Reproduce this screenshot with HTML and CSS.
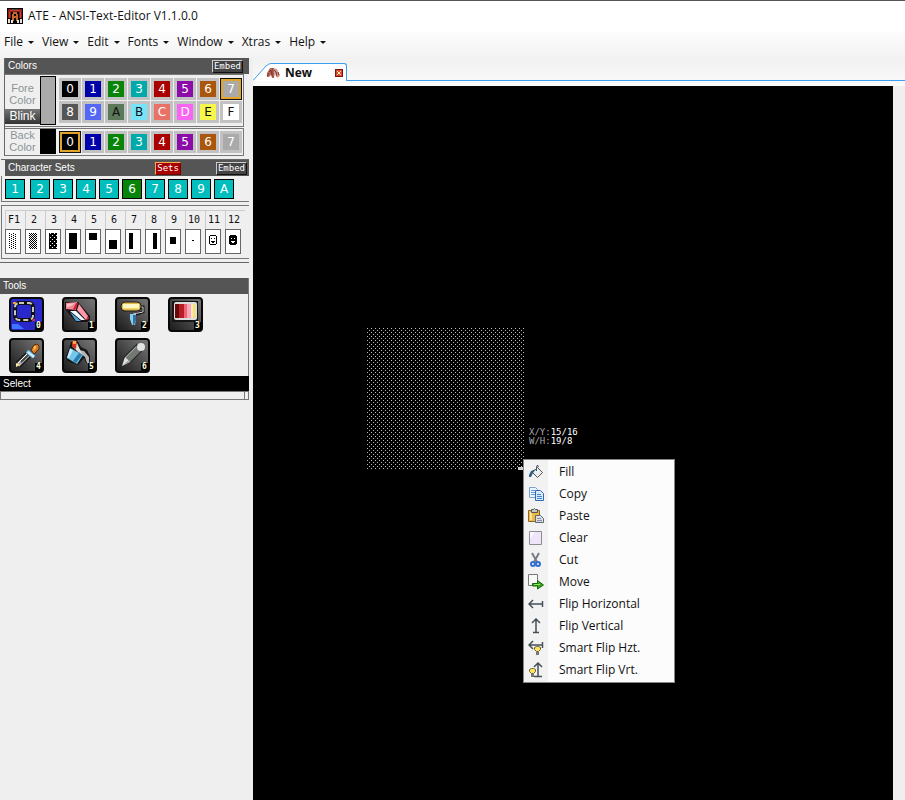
FILE: index.html
```
<!DOCTYPE html>
<html lang="en">
<head>
<meta charset="utf-8">
<title>ATE - ANSI-Text-Editor V1.1.0.0</title>
<link rel="stylesheet" href="styles.css">
</head>
<body>
<header class="titlebar">
  <svg class="logo" viewBox="0 0 16 16" shape-rendering="crispEdges"><path fill="#080404" d="M0 0h16v16H0z"/><path fill="#7c2020" d="M1 1h14v3H1zM1 4h3v6H1zM12 4h3v6h-3z"/><path fill="#d63a22" d="M3 2h10v1H3zM2 3h1v7H2zM13 3h1v7h-1z"/><path fill="#40454b" d="M5 1h6v1H5z"/><path fill="#c26a2a" d="M6 4h4v2h1v7H9v-3H7v3H5V6h1zM7 6v2h2V6z"/><path fill="#e9e1dc" d="M1 11h2v4H1zM4 12h2v3H4zM10 12h2v3h-2zM13 11h2v4h-2z"/></svg>
  <h1>ATE - ANSI-Text-Editor V1.1.0.0</h1>
</header>
<nav class="menubar">
  <button>File</button><button>View</button><button>Edit</button><button>Fonts</button><button>Window</button><button>Xtras</button><button>Help</button>
</nav>
<main class="workspace">
  <aside class="sidebar">
    <section class="colors">
      <header class="bar"><h2>Colors</h2><button class="mini">Embed</button></header>
      <div class="panel fore">
        <div class="side"><span class="name">Fore<br>Color</span><button class="blink">Blink</button></div>
        <div class="preview gray"></div>
        <div class="swatches">
          <button class="c0">0</button><button class="c1">1</button><button class="c2">2</button><button class="c3">3</button><button class="c4">4</button><button class="c5">5</button><button class="c6">6</button><button class="c7 picked">7</button>
          <button class="c8">8</button><button class="c9">9</button><button class="ca">A</button><button class="cb">B</button><button class="cc">C</button><button class="cd">D</button><button class="ce">E</button><button class="cf">F</button>
        </div>
      </div>
      <div class="panel back">
        <div class="side"><span class="name">Back<br>Color</span></div>
        <div class="preview"></div>
        <div class="swatches">
          <button class="c0 picked">0</button><button class="c1">1</button><button class="c2">2</button><button class="c3">3</button><button class="c4">4</button><button class="c5">5</button><button class="c6">6</button><button class="c7">7</button>
        </div>
      </div>
    </section>
    <section class="charsets">
      <header class="bar"><h2>Character Sets</h2><button class="mini red">Sets</button><button class="mini">Embed</button></header>
      <div class="sets">
        <button>1</button><button>2</button><button>3</button><button>4</button><button>5</button><button class="on">6</button><button>7</button><button>8</button><button>9</button><button>A</button>
      </div>
      <div class="keys">
        <button><span>F1</span><i><svg viewBox="0 0 8 16"><path fill="url(#light)" d="M0 0h8v16H0z"/></svg></i></button>
        <button><span>2</span><i><svg viewBox="0 0 8 16"><path fill="url(#mid)" d="M0 0h8v16H0z"/></svg></i></button>
        <button><span>3</span><i><svg viewBox="0 0 8 16"><path d="M0 0h8v16H0z"/><path fill="url(#holes)" d="M0 0h8v16H0z"/></svg></i></button>
        <button><span>4</span><i><svg viewBox="0 0 8 16"><path d="M0 0h8v16H0z"/></svg></i></button>
        <button><span>5</span><i><svg viewBox="0 0 8 16"><path d="M0 0h8v7H0z"/></svg></i></button>
        <button><span>6</span><i><svg viewBox="0 0 8 16"><path d="M0 7h8v9H0z"/></svg></i></button>
        <button><span>7</span><i><svg viewBox="0 0 8 16"><path d="M0 0h4v16H0z"/></svg></i></button>
        <button><span>8</span><i><svg viewBox="0 0 8 16"><path d="M4 0h4v16H4z"/></svg></i></button>
        <button><span>9</span><i><svg viewBox="0 0 8 16"><path d="M1 4h6v7H1z"/></svg></i></button>
        <button><span>10</span><i><svg viewBox="0 0 8 16"><path d="M3 7h2v1H3z"/></svg></i></button>
        <button><span>11</span><i><svg viewBox="0 0 8 16"><path d="M1 2h6v1H1zM0 3h1v8H0zM7 3h1v8H7zM1 11h6v1H1zM2 5h1v1H2zM5 5h1v1H5zM2 8h4v1H2zM3 9h2v1H3z"/></svg></i></button>
        <button><span>12</span><i><svg viewBox="0 0 8 16"><path fill-rule="evenodd" d="M1 2h6v1h1v8H7v1H1v-1H0V3h1zM2 5v1h1V5zM5 5v1h1V5zM2 8v1h1v1h2V9h1V8z"/></svg></i></button>
      </div>
    </section>
    <section class="tools">
      <header class="bar"><h2>Tools</h2></header>
      <div class="toolgrid">
        <button class="selected" aria-label="Select"><svg viewBox="0 0 35 35"><path fill="#3e74ff" d="M3 27h6l6 5H3z"/><rect x="6" y="6" width="18" height="17" rx="4" fill="none" stroke="#111" stroke-width="4"/><rect x="6" y="6" width="18" height="17" rx="4" fill="none" stroke="#ccc8b8" stroke-width="2" stroke-dasharray="5 3"/><path fill="#e8a030" d="M4 5h3v2H4z"/><path fill="#c03050" d="M23 22h3v2h-3z"/></svg><b>0</b></button>
        <button aria-label="Eraser"><svg viewBox="0 0 35 35"><path fill="#1a1013" d="M3 5h13l12 14v4l-3 2H14L3 12z"/><path fill="#f08a98" d="M4 6l11-1-1 8-10-1z"/><path fill="#ffc0c4" d="M5 7l8-1-4 3-4 1z"/><path fill="#cf2630" d="M14 6h2l-3 8-2-2z"/><path fill="#ff98a8" d="M17 7l9 12-2 4-9-10z"/><path fill="#d63a48" d="M26 19l1 3-3 1z"/><path fill="#eef9ff" d="M8 14h6l9 9h-4z"/><path fill="#52a9df" d="M8 15l11 9h-5z"/></svg><b>1</b></button>
        <button aria-label="Roller"><svg viewBox="0 0 35 35"><path fill="none" stroke="#171717" stroke-width="3" d="M25 10h3v5l-10 3v3"/><path fill="none" stroke="#d0d0d0" d="M25 10h3v5l-10 2v2"/><rect x="6" y="5" width="20" height="9" rx="4" fill="#dfb94b" stroke="#1b1b1b"/><path fill="#fff8c5" d="M8 7h16v4H8z"/><path fill="#f2da70" d="M8 11h16v1H8z"/><path fill="#85cff1" d="M15 17h6v5l-1 6h-3l-2-6z"/><path fill="#36709f" d="M18 18h3v5l-2 5h-1z"/></svg><b>2</b></button>
        <button aria-label="Gradient"><svg viewBox="0 0 35 35"><path fill="#151515" d="M4 4h26v21H4z"/><rect x="6" y="5" width="23" height="18" rx="2" fill="#ddd"/><path fill="#650909" d="M7 7h4v14H7z"/><path fill="#b71d27" d="M11 7h5v14h-5z"/><path fill="#ed6676" d="M16 7h3v14h-3z"/><path fill="#f9a8b4" d="M19 7h4v14h-4z"/><path fill="#ffe0d9" d="M23 7h2v14h-2z"/><path fill="#f7e64b" d="M25 7h2v14h-2z"/></svg><b>3</b></button>
        <button aria-label="Color picker"><svg viewBox="0 0 35 35"><path stroke="#151515" stroke-width="7" d="M9 27l13-13"/><path stroke="#aaa" stroke-width="4" d="M9 27l12-12"/><path stroke="#444" stroke-width="2" d="M12 24l8-8"/><path stroke="#fff" d="M9 25l11-11"/><path fill="#ffe9a9" d="M7 25l4 2-4 2z"/><path stroke="#69bbed" stroke-width="4" d="M18 13l7 6"/><path stroke="#d7f3ff" stroke-width="2" d="M19 14l6 5"/><path fill="#d97c18" stroke="#5a2b09" d="M22 12l3-5 3-1 2 2v3l-5 5z"/><path fill="#ffc166" d="M25 8h2v2l-3 3z"/></svg><b>4</b></button>
        <button aria-label="Fill"><svg viewBox="0 0 35 35"><path fill="#171717" d="M4 19L9 4l6-2 4 7 6 3 3 6v7h-4l-2-5-6 7-11-4z"/><path fill="#b5b5b5" d="M17 12l5 1 5 6v6h-2l-2-6-5-4z"/><path fill="#74c5ea" d="M8 10l13 7-6 9-10-6z"/><path fill="#c7edfd" d="M8 11l3 1-4 8H5z"/><path fill="#287caf" d="M17 15l3 2-6 8-3-2z"/><path fill="#e2dfdc" d="M10 8l5-3 5 11-4-2z"/><path fill="#c7381c" d="M10 3h5l-1 8-4-2z"/><path fill="#ffa252" d="M11 3h3v3h-3z"/></svg><b>5</b></button>
        <button aria-label="Pencil"><svg viewBox="0 0 35 35"><path stroke="#242424" stroke-width="9" d="M11 23L25 9"/><path stroke="#727872" stroke-width="7" d="M12 22L24 10"/><path stroke="#a5aaa5" d="M11 19L21 9"/><circle cx="26" cy="9" r="4" fill="#e4e4e4"/><path fill="#e1e1e1" d="M10 19l5 5-8 4z"/><path fill="#999" d="M13 23l2 1-7 3z"/></svg><b>6</b></button>
      </div>
      <div class="status">Select</div>
      <div class="strip"></div>
    </section>
  </aside>
  <section class="document">
    <div class="tabs">
      <svg class="slope" viewBox="0 0 18 18"><path fill="#fff" d="M0 18L14 2l4-1v17z"/><path fill="none" stroke="#3b9df0" d="M0 17.500L13 3Q16 .5 18 .5"/></svg>
      <div class="tab">
        <svg class="docicon" viewBox="0 0 14 12"><path fill="#b76658" d="M1 6l3-5h3l1 10H6L5 8 3 10H1z"/><path fill="#d8998e" d="M7 1l4 1 3 7-3 2-2-4-1 4z"/><path stroke="#773329" fill="none" d="M3 5l2-2 1 5M8 3l2 2 1 4M7 1v9M1 9l2-3M12 5l1 3"/></svg>
        <span>New</span>
        <button class="close" aria-label="Close tab"><svg viewBox="0 0 8 8" shape-rendering="crispEdges"><path fill="#7b1510" d="M0 0h8v8H0z"/><path fill="#db4030" d="M1 1h6v6H1z"/><path fill="#fff3a8" d="M2 2h1v1H2zM5 2h1v1H5zM3 3h2v2H3zM2 5h1v1H2zM5 5h1v1H5z"/></svg></button>
      </div>
      <div class="rest"></div>
    </div>
    <div class="canvas">
      <div class="selection"></div>
      <div class="coords"><span>X/Y:</span>15/16<br><span>W/H:</span>19/8</div>
      <menu class="context">
        <li><button><svg viewBox="0 0 16 16"><path fill="#eee" stroke="#4a525a" d="M4.500 8.500l5-5 5 5-5 5zM8.500 7V3l1-2 1 2"/><path fill="#315f7f" d="M1 11l2-4 5-2-3 4-2 4H1z"/></svg>Fill</button></li>
        <li><button><svg viewBox="0 0 16 16"><path fill="#eaf5ff" stroke="#7da1cb" d="M1.500 1.500h6l2 2v8h-8z"/><path stroke="#5d9ce0" d="M3 4.500h4M3 6.500h4M3 8.500h4"/><path fill="#d8eaff" stroke="#3769ad" d="M7.500 4.500h5l3 3v7h-8z"/><path stroke="#4282ce" d="M9 8.500h4M9 10.500h5M9 12.500h5"/></svg>Copy</button></li>
        <li><button><svg viewBox="0 0 16 16"><path fill="#edba47" stroke="#8c6426" d="M.5 2.500h11v11H.5z"/><path fill="#ffe591" d="M2 4h2v8H2z"/><path fill="#c7c7c7" stroke="#555" d="M3.500 4.500v-3h2l1-1 1 1h2v3z"/><path fill="#ddd" stroke="#626974" d="M7.500 7.500h5l3 3v4h-8z"/><path stroke="#8393a6" d="M9 10.500h4M9 12.500h5"/></svg>Paste</button></li>
        <li><button><svg viewBox="0 0 16 16"><path fill="#eee5fa" stroke="#8c8c94" d="M1.500 1.500h12v13h-12z"/><path fill="#fbf8ff" d="M2 2h5L2 9z"/></svg>Clear</button></li>
        <li><button><svg viewBox="0 0 16 16"><path stroke="#777d82" stroke-width="2" d="M4 1l5 9M11 1L6 10"/><g fill="none" stroke="#326ed2" stroke-width="2"><circle cx="5" cy="12" r="2"/><circle cx="10" cy="12" r="2"/></g></svg>Cut</button></li>
        <li><button><svg viewBox="0 0 16 16"><path fill="#fafafa" stroke="#777" d="M.5 .5h9v11h-9z"/><path fill="#35a41d" stroke="#17670c" d="M4.500 9.500h5v-3l6 4.500-6 4v-3h-5z"/><path stroke="#9cde62" d="M6 10.500h6"/></svg>Move</button></li>
        <li><button><svg viewBox="0 0 16 16"><path fill="none" stroke="#475057" stroke-width="1.500" d="M1 8h14M5 4L1 8l4 4M14.500 5v6"/></svg>Flip Horizontal</button></li>
        <li><button><svg viewBox="0 0 16 16"><path fill="none" stroke="#475057" stroke-width="1.500" d="M8 1v14M4 5l4-4 4 4M5 14.500h6"/></svg>Flip Vertical</button></li>
        <li><button><svg viewBox="0 0 16 16"><path fill="none" stroke="#475057" stroke-width="1.500" d="M1 5h14M5 1L1 5l4 4M14.500 2v6"/><path fill="#ffe55d" stroke="#68603c" d="M6.500 7.500l2-1h2l2 1v2l-2 2h-2l-2-2z"/><path fill="#777" d="M8 12h3v3H8z"/></svg>Smart Flip Hzt.</button></li>
        <li><button><svg viewBox="0 0 16 16"><path fill="none" stroke="#475057" stroke-width="1.500" d="M10 1v13M6 5l4-4 4 4M6 14.500h8"/><path fill="#ffe55d" stroke="#68603c" d="M1.500 7.500l2-1h2l2 1v2l-2 2h-2l-2-2z"/><path fill="#777" d="M3 12h3v3H3z"/></svg>Smart Flip Vrt.</button></li>
      </menu>
    </div>
  </section>
</main>
<svg class="defs" aria-hidden="true"><defs>
  <pattern id="light" width="4" height="2" patternUnits="userSpaceOnUse"><path d="M0 0h1v1H0zM2 1h1v1H2z"/></pattern>
  <pattern id="mid" width="2" height="2" patternUnits="userSpaceOnUse"><path d="M0 0h1v1H0zM1 1h1v1H1z"/></pattern>
  <pattern id="holes" width="4" height="4" patternUnits="userSpaceOnUse"><path fill="#fff" d="M1 0h1v1H1zM3 2h1v1H3z"/></pattern>
</defs></svg>
</body>
</html>
```
FILE: styles.css
```
* { box-sizing: border-box; }
body {
  margin: 0;
  min-height: 100vh;
  display: flex;
  flex-direction: column;
  background: #efefef;
  color: #111;
  font: 12px/16px "Open Sans", "Noto Sans", sans-serif;
  position: relative;
}
button { font: inherit; color: inherit; border: 0; padding: 0; margin: 0; background: none; }
h1, h2 { margin: 0; font: inherit; }
svg { display: block; }
.defs { position: absolute; width: 0; height: 0; }

.titlebar {
  display: flex;
  align-items: center;
  gap: 5px;
  height: 31px;
  padding-left: 7px;
  border-top: 1px solid #555;
  background: #fff;
}
.logo { width: 16px; height: 16px; }
.menubar {
  display: flex;
  gap: 8px;
  height: 27px;
  padding: 0 4px 5px;
  background: linear-gradient(#fdfdfd, #f2f2f2);
}
.menubar button { display: flex; align-items: center; gap: 5px; }
.menubar button::after { content: ""; border: 3px solid transparent; border-top-color: #111; border-bottom: 0; }
.workspace { flex: 1; display: flex; }

.sidebar { width: 253px; flex: none; background: #efefef; }
.bar {
  display: flex;
  align-items: center;
  height: 16px;
  background: #555;
  color: #fff;
  font: 10px/16px "Liberation Sans", sans-serif;
  padding: 0 2px 0 3px;
}
.bar h2 { flex: 1; }
.mini {
  height: 13px;
  padding: 0 1px;
  border: 1px solid #ccc;
  border-right-color: #111;
  border-bottom-color: #111;
  background: #444;
  color: #fff;
  font: 9px/10px "DejaVu Sans Mono", monospace;
}
.red { background: #a80000; border-color: #f5b04d #700 #700 #f5b04d; margin-right: 35px; }

.colors { margin: 0 4px; border-left: 1px solid #666; }
.colors .bar { padding-right: 6px; }
.panel { display: flex; margin-right: 5px; border: 1px solid #777; border-left: 0; }
.fore { height: 53px; padding-top: 1px; }
.back { height: 28px; margin-top: 1px; }
.side { width: 35px; display: flex; flex-direction: column; justify-content: space-between; }
.name {
  text-align: center;
  color: #8b9495;
  font: 11px/12px "Liberation Sans", sans-serif;
}
.fore .name { padding-top: 6px; }
.blink {
  height: 15px;
  margin-bottom: 2px;
  color: #fff;
  background: linear-gradient(#777, #333);
  font: 12px/15px "Liberation Sans", sans-serif;
}
.preview { width: 16px; background: #000; border: 1px solid #000; margin-bottom: 1px; }
.gray { background: #aaa; }
.swatches { display: grid; grid-template-columns: repeat(8, 22px); gap: 1px; align-content: start; padding: 2px 0 0 3px; }
.swatches button {
  height: 22px;
  border: 3px solid #c2c2c2;
  color: #fff;
  font: 12px/16px "DejaVu Sans", sans-serif;
}
.swatches .picked { border: 1px solid #111; box-shadow: inset 0 0 0 2px #e2a32a; }
.c0 { background: #000; } .c1 { background: #00a; } .c2 { background: #088408; } .c3 { background: #00aaaa; }
.c4 { background: #a00; } .c5 { background: #8c0caa; } .c6 { background: #aa560c; } .c7 { background: #aaa; }
.c8 { background: #555; } .c9 { background: #5568f5; } .ca { background: #5a7958; } .cb { background: #75e4fa; }
.cc { background: #e87267; } .cd { background: #f865f2; } .ce { background: #f6f64d; } .cf { background: #fff; }
.swatches .ca, .swatches .cb, .swatches .ce, .swatches .cf { color: #111; }

.charsets { margin: 3px 4px 0 1px; border-top: 1px solid #666; }
.charsets .bar { margin-left: 4px; }
.sets {
  display: flex;
  gap: 3px;
  height: 26px;
  padding: 3px;
  border: 1px solid #777;
  border-width: 0 0 1px 1px;
}
.sets button {
  width: 20px;
  height: 20px;
  border: 1px solid #000;
  background: #00bebe;
  color: #fff;
  font: 12px/16px "DejaVu Sans", sans-serif;
}
.sets button:first-child { margin-right: 2px; }
.sets .on { background: #088408; }
.keys {
  display: flex;
  gap: 4px;
  height: 54px;
  margin-top: 3px;
  padding: 3px;
  border: 1px solid #777;
  border-right: 0;
}
.keys button { width: 16px; }
.keys span {
  display: block;
  width: 20px;
  height: 19px;
  padding-right: 3px;
  border: 1px solid #ccc;
  border-width: 1px 0 0 1px;
  font: 10px/17px "DejaVu Sans Mono", monospace;
}
.keys i { display: block; height: 25px; padding: 3px; border: 1px solid #666; background: #fff; }
.keys svg { width: 8px; height: 16px; margin: auto; shape-rendering: crispEdges; }

.tools { margin: 3px 4px 0 0; border-top: 1px solid #666; padding-top: 15px; }
.tools .bar { border-right: 1px solid #777; }
.toolgrid {
  display: grid;
  grid-template-columns: repeat(4, 35px);
  gap: 6px 18px;
  padding: 3px 0 3px 9px;
  border-right: 1px solid #777;
}
.toolgrid button {
  position: relative;
  height: 35px;
  border: 2px solid #080808;
  border-radius: 4px;
  background: linear-gradient(45deg, #1b1b1b, #777);
}
.toolgrid svg { width: 35px; height: 35px; margin: -2px; }
.toolgrid .selected { background: #2929cb; }
.toolgrid b {
  position: absolute;
  right: 0;
  bottom: 0;
  width: 7px;
  background: #000;
  color: #ffd;
  font: bold 8px/8px "DejaVu Sans Mono", monospace;
}
.status { height: 15px; padding-left: 3px; background: #000; color: #fff; font: 10px/15px "Liberation Sans", sans-serif; }
.strip { height: 9px; border: 1px solid #777; box-shadow: inset -3px 0 #efefef, inset -4px 0 #777; }

.document { flex: 1; display: flex; flex-direction: column; min-width: 0; padding-right: 12px; }
.tabs { display: flex; height: 28px; padding: 5px 0 5px; margin-right: -12px; background: linear-gradient(#f2f2f2 0 4px, #fbfbfb); }
.slope { width: 18px; height: 18px; }
.tab {
  display: flex;
  align-items: center;
  width: 76px;
  height: 18px;
  padding-right: 3px;
  border: 1px solid #3b9df0;
  border-width: 1px 1px 0 0;
  border-radius: 0 3px 0 0;
  background: #fff;
  font-weight: 700;
}
.docicon { width: 14px; height: 12px; margin: 0 5px 0 -5px; }
.tab span { flex: 1; }
.close { width: 8px; height: 8px; }
.close svg { width: 8px; height: 8px; }
.rest { flex: 1; border-bottom: 1px solid #3b9df0; }
.canvas { flex: 1; position: relative; background: #000; }
.selection {
  position: absolute;
  left: 114px;
  top: 242px;
  width: 158px;
  height: 142px;
  background:
    conic-gradient(#ccc 0 0) right bottom / 7px 3px no-repeat,
    conic-gradient(from 270deg at 1px 1px, #bbb 90deg, transparent 0) 0 0 / 4px 4px,
    conic-gradient(from 270deg at 1px 1px, #bbb 90deg, transparent 0) 2px 2px / 4px 4px;
}
.coords {
  position: absolute;
  left: 276px;
  top: 342px;
  color: #fff;
  font: 9px/9px "DejaVu Sans Mono", monospace;
}
.coords span { color: #aaa; }
.context {
  position: absolute;
  left: 270px;
  top: 373px;
  width: 152px;
  margin: 0;
  padding: 1px 0;
  list-style: none;
  border: 1px solid #83888d;
  background: linear-gradient(90deg, #f2f2f2 24px, #fcfcfc 0);
}
.context button { display: flex; align-items: center; gap: 15px; width: 100%; height: 22px; padding-left: 4px; }
.context svg { width: 16px; height: 16px; }
```
